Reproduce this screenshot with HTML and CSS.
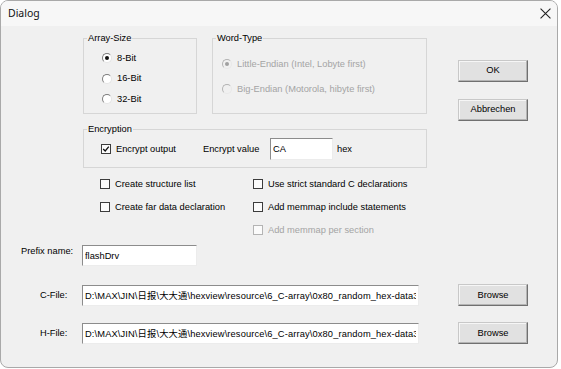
FILE: index.html
```html
<!DOCTYPE html>
<html lang="en">
<head>
    <meta charset="UTF-8">
    <title>Dialog</title>
    <link rel="stylesheet" href="styles.css">
</head>
<body>
    <div class="window">
        <div class="titlebar">
            <span class="title">Dialog</span>
            <svg class="close" viewBox="0 0 10 10" width="11" height="11">
                <path d="M0.5 0.5 L9.5 9.5 M9.5 0.5 L0.5 9.5" stroke="#222" stroke-width="1" fill="none"/>
            </svg>
        </div>

        <div class="client">
            <div class="top-row">
                <div class="group size-group">
                    <span class="group-title">Array-Size</span>
                    <div class="group-body">
                        <label class="radio"><span class="dot checked"></span>8-Bit</label>
                        <label class="radio"><span class="dot"></span>16-Bit</label>
                        <label class="radio"><span class="dot"></span>32-Bit</label>
                    </div>
                </div>

                <div class="group type-group">
                    <span class="group-title">Word-Type</span>
                    <div class="group-body">
                        <label class="radio disabled"><span class="dot checked"></span>Little-Endian (Intel, Lobyte first)</label>
                        <label class="radio disabled"><span class="dot"></span>Big-Endian (Motorola, hibyte first)</label>
                    </div>
                </div>

                <div class="buttons">
                    <button class="btn">OK</button>
                    <button class="btn">Abbrechen</button>
                </div>
            </div>

            <div class="group enc-group">
                <span class="group-title">Encryption</span>
                <div class="group-body enc-row">
                    <label class="check enc-check">
                        <span class="box"><svg viewBox="0 0 10 10" width="8" height="8"><path d="M1.5 5 L4 7.5 L8.5 2" stroke="#111" stroke-width="1.6" fill="none"/></svg></span>
                        Encrypt output
                    </label>
                    <span class="enc-label">Encrypt value</span>
                    <input class="edit enc-edit" type="text" value="CA">
                    <span class="hex">hex</span>
                </div>
            </div>

            <div class="options">
                <label class="check"><span class="box"></span>Create structure list</label>
                <label class="check"><span class="box"></span>Use strict standard C declarations</label>
                <label class="check"><span class="box"></span>Create far data declaration</label>
                <label class="check"><span class="box"></span>Add memmap include statements</label>
                <span></span>
                <label class="check disabled"><span class="box"></span>Add memmap per section</label>
            </div>

            <div class="prefix-row">
                <span class="prefix-label">Prefix name:</span>
                <input class="edit prefix-edit" type="text" value="flashDrv">
            </div>

            <div class="file-row">
                <span class="file-label">C-File:</span>
                <input class="edit file-edit" type="text" value="D:\MAX\JIN\日报\大大通\hexview\resource\6_C-array\0x80_random_hex-data3.c">
                <button class="btn browse">Browse</button>
            </div>
            <div class="file-row h-row">
                <span class="file-label">H-File:</span>
                <input class="edit file-edit" type="text" value="D:\MAX\JIN\日报\大大通\hexview\resource\6_C-array\0x80_random_hex-data3.h">
                <button class="btn browse">Browse</button>
            </div>
        </div>
    </div>
</body>
</html>
```
FILE: styles.css
```css
* {
    box-sizing: border-box;
}

body {
    margin: 0;
    background-color: #ffffff;
    font-family: "Liberation Sans", "Noto Sans CJK SC", sans-serif;
    font-size: 9.3px;
    line-height: 11px;
    color: #000;
}

.window {
    width: 558px;
    height: 368px;
    border: 1px solid #a9a9a9;
    border-radius: 8px;
    background-color: #f0f0f0;
    overflow: hidden;
}

.titlebar {
    height: 25px;
    background-color: #f7f7f7;
    display: flex;
    align-items: center;
    justify-content: space-between;
    padding: 0 6px 0 7px;
}

.title {
    font-family: "Noto Sans", sans-serif;
    font-size: 10.5px;
    color: #111;
}

/* group boxes: the title sits over the top border */
.group {
    border: 1px solid #d6d6d6;
}

.group-title {
    display: block;
    width: fit-content;
    margin: -6px 0 0 3px;
    padding: 0 1px;
    background-color: #f0f0f0;
    line-height: 11px;
}

.top-row {
    display: flex;
    align-items: flex-start;
    height: 76px;
    margin-top: 12px;
    padding-left: 82px;
}

.size-group {
    width: 114px;
    height: 76px;
}

.size-group .group-body {
    padding: 4px 0 0 18px;
}

.type-group {
    width: 215px;
    height: 76px;
    margin-left: 15px;
}

.type-group .group-body {
    padding: 10px 0 0 9px;
}

.radio {
    display: flex;
    align-items: center;
    gap: 5px;
    height: 20.5px;
}

.type-group .radio {
    height: 20px;
    gap: 5px;
}

.type-group .radio + .radio {
    margin-top: 5px;
}

.dot {
    width: 10px;
    height: 10px;
    border-radius: 50%;
    border: 1px solid;
    border-color: #7d7d7d #e4e4e4 #e4e4e4 #7d7d7d;
    background-color: #fff;
    display: flex;
    align-items: center;
    justify-content: center;
}

.dot.checked::after {
    content: "";
    width: 4px;
    height: 4px;
    border-radius: 50%;
    background-color: #111;
}

.disabled {
    color: #a4a4a4;
}

.disabled .dot {
    background-color: #f0f0f0;
    border-color: #b4b4b4 #e8e8e8 #e8e8e8 #b4b4b4;
}

.disabled .dot.checked::after {
    background-color: #a0a0a0;
}

.buttons {
    display: flex;
    flex-direction: column;
    gap: 17px;
    margin: 21.5px 0 0 31px;
}

.btn {
    width: 70px;
    height: 22px;
    padding: 0;
    font: inherit;
    color: #000;
    background-color: #e1e1e1;
    border: 1px solid;
    border-color: #c8c8c8 #707070 #707070 #c8c8c8;
    box-shadow: inset -1px -1px 0 #b4b4b4, inset 1px 1px 0 #f6f6f6;
}

/* encryption */
.enc-group {
    width: 344px;
    height: 39px;
    margin: 15px 0 0 82px;
}

.enc-row {
    display: flex;
    align-items: center;
    height: 22px;
    margin-top: 3px;
    padding-left: 17px;
}

.enc-check {
    width: 102px;
}

.enc-label {
    width: 67px;
}

.enc-edit {
    width: 63px;
    height: 22px;
}

.hex {
    margin-left: 4px;
}

/* checkboxes */
.check {
    display: flex;
    align-items: center;
    gap: 5px;
}

.box {
    width: 10px;
    height: 10px;
    border: 1px solid #3c3c3c;
    background-color: #fbfbfb;
    display: flex;
    align-items: center;
    justify-content: center;
}

.check.disabled .box {
    border-color: #b4b4b4;
}

.options {
    display: grid;
    grid-template-columns: 153px auto;
    grid-auto-rows: 23px;
    align-items: center;
    margin: 4.5px 0 0 99px;
}

/* edit fields */
.edit {
    margin: 0;
    padding: 0 2px;
    font: inherit;
    color: #000;
    background-color: #fff;
    border: 1px solid;
    border-color: #8c8c8c #ececec #ececec #8c8c8c;
    outline: none;
}

.prefix-row {
    display: flex;
    align-items: flex-start;
    margin-top: 3.5px;
}

.prefix-label {
    width: 61px;
    margin-left: 20px;
    padding-top: 1px;
}

.prefix-edit {
    width: 115px;
    height: 21px;
}

.file-row {
    display: flex;
    align-items: center;
    height: 22px;
    margin-top: 18px;
}

.file-row.h-row {
    margin-top: 16px;
}

.file-label {
    width: 42px;
    margin-left: 39px;
}

.file-edit {
    width: 337px;
    height: 21px;
    letter-spacing: 0.13px;
}

.browse {
    margin-left: 39px;
}
```
